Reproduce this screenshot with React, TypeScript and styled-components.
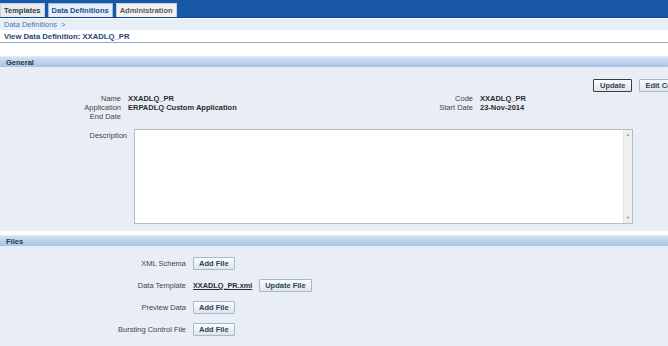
import React from 'react';
import styled, { createGlobalStyle } from 'styled-components';

const GlobalStyle = createGlobalStyle`
  html, body {
    margin: 0;
    padding: 0;
    background: #ffffff;
  }
  body {
    font-family: "Liberation Sans", Arial, sans-serif;
    font-size: 7.5px;
    color: #333;
    overflow: hidden;
  }
`;

const Page = styled.div`
  width: 668px;
  height: 346px;
  overflow: hidden;
  display: flex;
  flex-direction: column;
`;

const TabBar = styled.div`
  height: 17px;
  background: #1858a7;
  border-bottom: 1px solid #0f4488;
  display: flex;
  align-items: flex-end;
  gap: 3px;
  flex-shrink: 0;
`;

const Tab = styled.div<{ $active?: boolean; $muted?: boolean }>`
  height: 13px;
  padding: 0 3px;
  display: flex;
  align-items: center;
  font-weight: bold;
  font-size: 7.5px;
  border: 1px solid ${(p) => (p.$active ? '#9fbbe0' : '#c8d2dc')};
  border-bottom: none;
  background: ${(p) => (p.$active ? '#e4edf8' : p.$muted ? '#f1f2f3' : '#e6ebf0')};
  color: ${(p) => (p.$active ? '#1d4f8f' : p.$muted ? '#585858' : '#3a3a3a')};
`;

const Crumbs = styled.div`
  margin-top: 1px;
  height: 11px;
  flex-shrink: 0;
  background: #e8eef6;
  color: #3d7cb6;
  padding-left: 4px;
  display: flex;
  align-items: center;
  font-size: 7.5px;
`;

const PageTitle = styled.div`
  height: 12px;
  flex-shrink: 0;
  padding: 0 4px;
  display: flex;
  align-items: center;
  color: #1f4776;
  font-size: 7.7px;
  font-weight: bold;
  border-bottom: 1px solid #91a9c2;
`;

const Section = styled.section<{ $gap: number }>`
  margin-top: ${(p) => p.$gap}px;
  display: flex;
  flex-direction: column;
  flex-shrink: 0;
`;

const SectionHead = styled.div`
  height: 10px;
  padding-left: 6px;
  display: flex;
  align-items: center;
  font-weight: bold;
  font-size: 7.5px;
  color: #26364a;
  background: linear-gradient(#d2e2f2, #a5c5e5);
  border-top: 1px solid #e2ecf6;
`;

const SectionBody = styled.div<{ $height: number }>`
  height: ${(p) => p.$height}px;
  background: #e9eef6;
  overflow: hidden;
`;

const ButtonRow = styled.div`
  display: flex;
  gap: 7px;
  padding: 12px 0 0 593px;
  height: 13px;
  white-space: nowrap;
`;

const Button = styled.button<{ $default?: boolean }>`
  height: 13px;
  padding: 0 ${(p) => (p.$default ? 6 : 5)}px;
  flex-shrink: 0;
  font-family: "Liberation Sans", Arial, sans-serif;
  font-size: 7.5px;
  font-weight: bold;
  color: #2d4257;
  background: linear-gradient(#fbfcfd, #dde6ec);
  border: 1px solid ${(p) => (p.$default ? '#3c3c3c' : '#a8b8c6')};
  border-radius: 1px;
  white-space: nowrap;
  cursor: pointer;
  line-height: 11px;
`;

const FieldGrid = styled.div`
  margin-top: 2px;
  display: grid;
  grid-template-columns: 121px 278px 74px 1fr;
  grid-auto-rows: 9px;
  align-items: center;
`;

const Label = styled.div`
  text-align: right;
  color: #444;
  white-space: nowrap;
`;

const Value = styled.div`
  padding-left: 7px;
  font-weight: bold;
  color: #2b2b2b;
  white-space: nowrap;
`;

const DescRow = styled.div`
  margin-top: 8px;
  display: flex;
  align-items: flex-start;
`;

const DescLabel = styled(Label)`
  width: 127px;
  padding-top: 2px;
`;

const TextBox = styled.div`
  margin-left: 7px;
  width: 497px;
  height: 93px;
  background: #fff;
  border: 1px solid #b9bcbf;
  display: flex;
  justify-content: flex-end;
`;

const ScrollTrack = styled.div`
  width: 8px;
  background: #efefef;
  border-left: 1px solid #e2e2e2;
  display: flex;
  flex-direction: column;
  justify-content: space-between;
  align-items: center;
  padding: 3px 0;
  color: #8a8a8a;
  font-size: 4px;
  line-height: 4px;
`;

const FileRows = styled.div`
  padding-top: 10px;
  display: flex;
  flex-direction: column;
  gap: 8px;
`;

const FileRow = styled.div`
  display: flex;
  align-items: center;
  height: 14px;
`;

const FileLabel = styled(Label)`
  width: 193px;
  padding-right: 7px;
  box-sizing: border-box;
`;

const FileLink = styled.a`
  font-weight: bold;
  color: #1d2d44;
  text-decoration: underline;
  margin-right: 7px;
  font-size: 7.3px;
`;

const files: { label: string; link?: string; action: string }[] = [
  { label: 'XML Schema', action: 'Add File' },
  { label: 'Data Template', link: 'XXADLQ_PR.xml', action: 'Update File' },
  { label: 'Preview Data', action: 'Add File' },
  { label: 'Bursting Control File', action: 'Add File' },
];

export default function App() {
  return (
    <Page>
      <GlobalStyle />
      <TabBar>
        <Tab>Templates</Tab>
        <Tab $active>Data Definitions</Tab>
        <Tab $muted>Administration</Tab>
      </TabBar>
      <Crumbs>Data Definitions&nbsp;&nbsp;&gt;</Crumbs>
      <PageTitle>View Data Definition: XXADLQ_PR</PageTitle>

      <Section $gap={13}>
        <SectionHead>General</SectionHead>
        <SectionBody $height={164}>
          <ButtonRow>
            <Button $default>Update</Button>
            <Button>Edit Configuration</Button>
          </ButtonRow>
          <FieldGrid>
            <Label>Name</Label>
            <Value>XXADLQ_PR</Value>
            <Label>Code</Label>
            <Value>XXADLQ_PR</Value>
            <Label>Application</Label>
            <Value>ERPADLQ Custom Application</Value>
            <Label>Start Date</Label>
            <Value>23-Nov-2014</Value>
            <Label>End Date</Label>
            <Value />
          </FieldGrid>
          <DescRow>
            <DescLabel>Description</DescLabel>
            <TextBox>
              <ScrollTrack>
                <span>▲</span>
                <span>▼</span>
              </ScrollTrack>
            </TextBox>
          </DescRow>
        </SectionBody>
      </Section>

      <Section $gap={4}>
        <SectionHead>Files</SectionHead>
        <SectionBody $height={101}>
          <FileRows>
            {files.map((f) => (
              <FileRow key={f.label}>
                <FileLabel>{f.label}</FileLabel>
                {f.link && <FileLink href="#">{f.link}</FileLink>}
                <Button>{f.action}</Button>
              </FileRow>
            ))}
          </FileRows>
        </SectionBody>
      </Section>
    </Page>
  );
}
